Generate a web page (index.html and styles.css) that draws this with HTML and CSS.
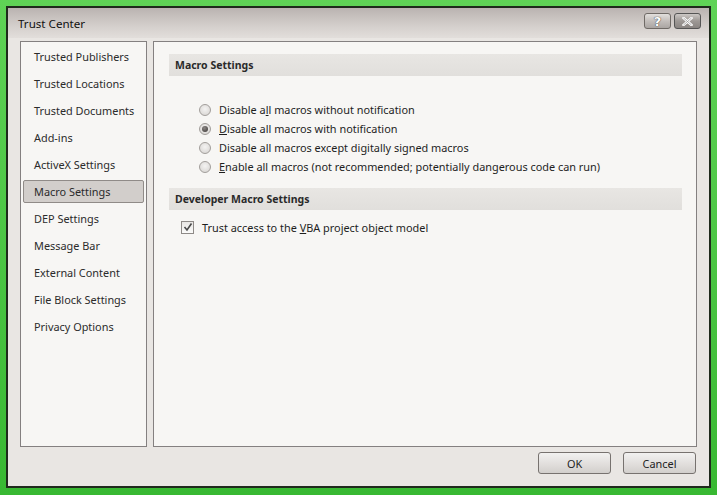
FILE: index.html
```html
<!DOCTYPE html>
<html>
<head>
<meta charset="utf-8">
<link rel="stylesheet" href="styles.css">
</head>
<body>
<div class="frame">
  <div class="dialog">
    <div class="titlebar">
      <span class="title">Trust Center</span>
      <div class="tb-buttons">
        <div class="tb-btn">?</div>
        <div class="tb-btn close">
          <svg width="11" height="9" viewBox="0 0 11 9"><path d="M1.5 1 L9.5 8 M9.5 1 L1.5 8" stroke="#fff" stroke-width="2.4" stroke-linecap="square"/><path d="M1.5 1 L9.5 8 M9.5 1 L1.5 8" stroke="#333" stroke-width="0.8" opacity="0.5"/></svg>
        </div>
      </div>
    </div>
    <div class="body">
      <ul class="nav">
        <li class="nav-item">Trusted Publishers</li>
        <li class="nav-item">Trusted Locations</li>
        <li class="nav-item">Trusted Documents</li>
        <li class="nav-item">Add-ins</li>
        <li class="nav-item">ActiveX Settings</li>
        <li class="nav-item selected">Macro Settings</li>
        <li class="nav-item">DEP Settings</li>
        <li class="nav-item">Message Bar</li>
        <li class="nav-item">External Content</li>
        <li class="nav-item">File Block Settings</li>
        <li class="nav-item">Privacy Options</li>
      </ul>
      <div class="content">
        <div class="section-head">Macro Settings</div>
        <div class="radios">
          <div class="opt"><span class="radio"></span><span>Disable a<u>l</u>l macros without notification</span></div>
          <div class="opt"><span class="radio checked"></span><span><u>D</u>isable all macros with notification</span></div>
          <div class="opt"><span class="radio"></span><span>Disable all macros except di<u>g</u>itally signed macros</span></div>
          <div class="opt"><span class="radio"></span><span><u>E</u>nable all macros (not recommended; potentially dangerous code can run)</span></div>
        </div>
        <div class="section-head second">Developer Macro Settings</div>
        <div class="check-row">
          <span class="checkbox"><svg width="10" height="10" viewBox="0 0 10 10"><path d="M1.5 5 L4 8 L8.5 1.5" fill="none" stroke="#4a4a4a" stroke-width="1.6"/></svg></span>
          <span>Trust access to the <u>V</u>BA project object model</span>
        </div>
      </div>
    </div>
    <div class="footer">
      <button class="btn">OK</button>
      <button class="btn">Cancel</button>
    </div>
  </div>
</div>
</body>
</html>
```
FILE: styles.css
```css
* { box-sizing: border-box; }
html, body { margin: 0; padding: 0; }
body {
  width: 717px;
  height: 495px;
  overflow: hidden;
  font-family: "Noto Sans", "Open Sans", sans-serif;
  font-size: 10.9px;
  color: #1e1e1e;
}
.frame {
  width: 717px;
  height: 495px;
  padding: 6px 6px 7px 6px;
  background: linear-gradient(#5fd356, #38b832);
}
.dialog {
  width: 100%;
  height: 100%;
  border: 2px solid #1f2a1c;
  background: #e9e6e3;
  display: flex;
  flex-direction: column;
}
.titlebar {
  height: 30px;
  flex: none;
  display: flex;
  align-items: center;
  justify-content: space-between;
  padding: 0 8px 0 10px;
  background: linear-gradient(#bab3b1, #d4cfcc 60%, #e2dedb);
}
.title {
  font-size: 11.6px;
  color: #111;
  margin-top: 1px;
}
.tb-buttons {
  display: flex;
  gap: 3px;
  margin-top: -4px;
}
.tb-btn {
  width: 27px;
  height: 16px;
  border: 1px solid #6f6a66;
  border-radius: 3px;
  background: linear-gradient(#e2dfdc, #c3bebb 50%, #aaa5a2);
  display: flex;
  align-items: center;
  justify-content: center;
  color: #fff;
  font-weight: bold;
  font-size: 13px;
  font-family: "DejaVu Sans", sans-serif;
  text-shadow: 0 0 1px #444, 0 0 1px #444;
}
.tb-btn.close {
  background: linear-gradient(#ccc8c5, #9d9895 50%, #8a8582);
  border-color: #555;
}
.body {
  flex: 1;
  display: flex;
  gap: 6px;
  padding: 3px 12px 0 12px;
}
.nav {
  width: 127px;
  margin: 0;
  padding: 3px 2px;
  list-style: none;
  background: #f7f6f4;
  border: 1px solid #848080;
  display: flex;
  flex-direction: column;
  gap: 4px;
}
.nav-item {
  height: 23px;
  padding: 0 10px;
  line-height: 22px;
  border: 1px solid transparent;
  border-radius: 2px;
  color: #2b2b2b;
  white-space: nowrap;
}
.nav-item.selected {
  background: #d2cecb;
  border-color: #908b88;
}
.content {
  flex: 1;
  background: #f7f6f4;
  border: 1px solid #848080;
  padding: 12px 14px 0 15px;
}
.section-head {
  height: 22px;
  line-height: 22px;
  padding-left: 6px;
  background: linear-gradient(#e8e6e3, #e1dfdc);
  font-weight: bold;
  font-size: 10.5px;
  color: #2a2a2a;
}
.radios {
  padding-top: 24px;
  padding-left: 30px;
  display: flex;
  flex-direction: column;
}
.opt {
  height: 19px;
  display: flex;
  align-items: center;
  gap: 8px;
}
.radio {
  width: 12px;
  height: 12px;
  border-radius: 50%;
  border: 1px solid #a29e9b;
  background: radial-gradient(circle at 50% 40%, #f4f3f2, #d5d2cf);
  position: relative;
  flex: none;
}
.radio.checked::after {
  content: "";
  position: absolute;
  left: 2px;
  top: 2px;
  width: 6px;
  height: 6px;
  border-radius: 50%;
  background: radial-gradient(circle at 40% 35%, #8a8684, #3a3634);
}
.section-head.second {
  margin-top: 12px;
}
.check-row {
  height: 34px;
  display: flex;
  align-items: center;
  gap: 8px;
  padding-left: 12px;
}
.checkbox {
  width: 13px;
  height: 13px;
  border: 1px solid #8e8a87;
  background: linear-gradient(#e8e6e4, #fbfbfa);
  display: flex;
  align-items: center;
  justify-content: center;
  flex: none;
}
.footer {
  height: 39px;
  flex: none;
  display: flex;
  justify-content: flex-end;
  align-items: flex-start;
  gap: 12px;
  padding: 5px 13px 0 0;
}
.btn {
  width: 73px;
  height: 22px;
  border: 1px solid #77726f;
  border-radius: 3px;
  background: linear-gradient(#f2f1f0, #e3e0de 50%, #d2cfcc);
  font-family: "Noto Sans", "Open Sans", sans-serif;
  font-size: 10.9px;
  color: #222;
  padding: 0;
}
```
